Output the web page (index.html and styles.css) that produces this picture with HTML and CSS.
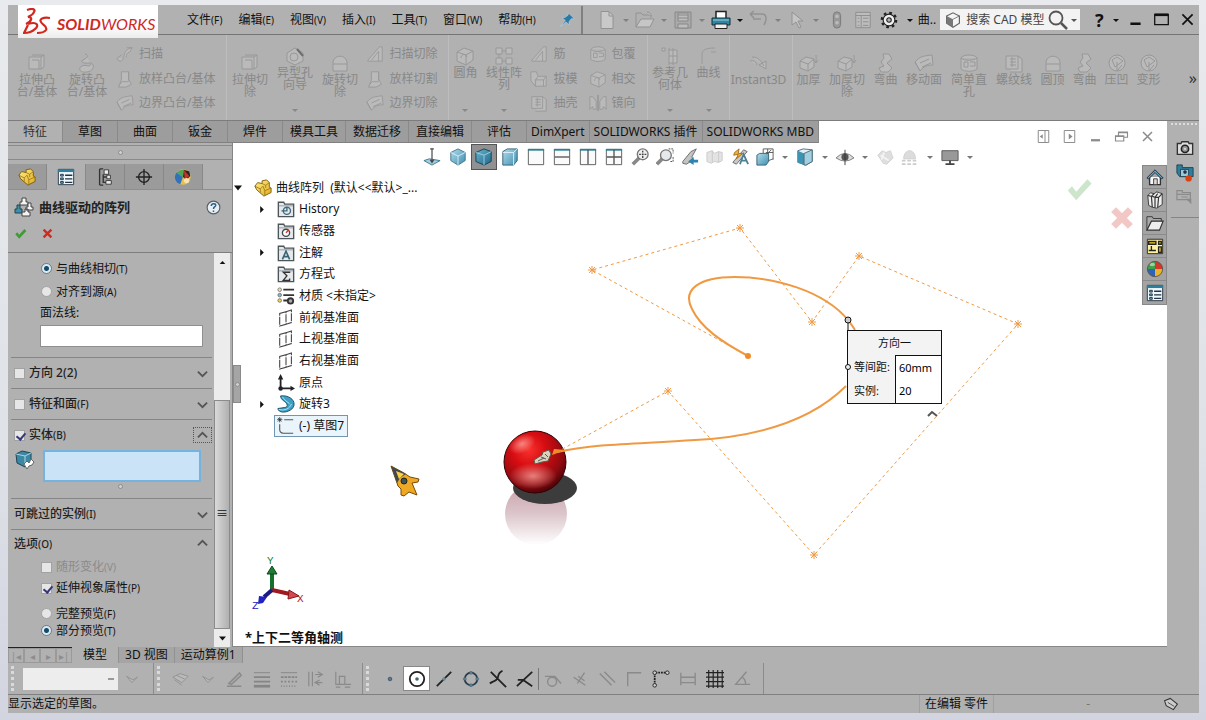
FILE: index.html
```html
<!DOCTYPE html>
<html lang="zh-CN">

<head>
  <meta charset="UTF-8">
  <meta name="viewport" content="width=device-width, initial-scale=1.0">
  <title>SOLIDWORKS</title>
  <link rel="stylesheet" href="styles.css">
</head>

<body>
  <!-- icon library -->
  <svg class="defs" aria-hidden="true">
    <defs>
      <linearGradient id="blue" x1="0" y1="0" x2="1" y2="1">
        <stop offset="0" stop-color="#b5dcea" />
        <stop offset="1" stop-color="#3f8fb0" />
      </linearGradient>
      <linearGradient id="deep" x1="0" y1="0" x2="1" y2="1">
        <stop offset="0" stop-color="#6db4cf" />
        <stop offset="1" stop-color="#1f6788" />
      </linearGradient>
      <linearGradient id="gold" x1="0" y1="0" x2="1" y2="1">
        <stop offset="0" stop-color="#ffee88" />
        <stop offset="1" stop-color="#e0ac20" />
      </linearGradient>
      <radialGradient id="red-ball" cx="0.4" cy="0.3" r="0.75">
        <stop offset="0" stop-color="#f8322e" />
        <stop offset="0.35" stop-color="#d80d12" />
        <stop offset="0.75" stop-color="#8e0a10" />
        <stop offset="1" stop-color="#3d0206" />
      </radialGradient>
      <radialGradient id="glow">
        <stop offset="0" stop-color="#ffb0a8" stop-opacity="0.7" />
        <stop offset="1" stop-color="#ffb0a8" stop-opacity="0" />
      </radialGradient>
      <linearGradient id="mirror" x1="0" y1="0" x2="0" y2="1">
        <stop offset="0" stop-color="#c9a0aa" />
        <stop offset="0.5" stop-color="#dcc6cb" />
        <stop offset="1" stop-color="#fff" />
      </linearGradient>
      <symbol id="i-part" viewBox="0 0 20 20"><path d="M1 8l3-4 5 1V2l5-1 3 3v5l2 1v5l-8 4L3 12z" fill="url(#gold)" stroke="#7c5a08" /><path d="M1 8l6 3 3-3 2 5 7-3M7 11v4M12 13v5M9 5l4 2 4-3M13 7v3" fill="none" stroke="#8f6a0c" stroke-width=".8" /></symbol>
      <symbol id="i-list" viewBox="0 0 20 20"><path d="M1.500 1.500h17v17h-17z" fill="#eef7fa" stroke="#234" /><path d="M1 3h18" stroke="#2d7f9c" stroke-width="3" /><path d="M4 7h3v2H4zM4 11h3v2H4zM4 15h3v2H4z" fill="#6ab" stroke="#234" /><path d="M9 8h8M9 12h8M9 16h8" stroke="#234" stroke-width="1.500" /></symbol>
      <symbol id="i-config" viewBox="0 0 20 20"><path d="M4 1v18M4 1h4M4 19h4M8 7v9h4M8 10h4" fill="none" stroke="#333" stroke-width="1.500" /><path d="M9 2h5v5H9zM12 8h4v4h-4zM11 14h6v4h-6z" fill="#eee" stroke="#333" /></symbol>
      <symbol id="i-target" viewBox="0 0 20 20"><circle cx="10" cy="10" r="6" fill="none" stroke="#222" stroke-width="1.500" /><path d="M10 1v18M1 10h18" stroke="#222" stroke-width="1.500" /></symbol>
      <symbol id="i-ball" viewBox="0 0 20 20"><circle cx="10" cy="10" r="8.500" fill="#e9b52c" /><path d="M10 10L10 1.500A8.500 8.500 0 0 0 1.500 10z" fill="#3fa24b" /><path d="M10 10L10 1.500A8.500 8.500 0 0 1 18.500 10z" fill="#d83626" /><path d="M10 10L1.500 10A8.500 8.500 0 0 0 10 18.500z" fill="#2f62b8" /><ellipse cx="7" cy="5" rx="3" ry="2" fill="#fff" opacity=".5" /><circle cx="10" cy="10" r="8.500" fill="none" stroke="#555" /></symbol>
      <symbol id="i-ball2" viewBox="0 0 20 20"><circle cx="10" cy="10" r="8.500" fill="#eac04a" /><path d="M10 10L3 5a8 8 0 0 0 4 13z" fill="#3372b8" /><path d="M10 10L3 5a9 9 0 0 1 8-3z" fill="#4da658" /><path d="M10 10l1-8 6 2 1 5-4 4z" fill="#222" /><path d="M11 2l6 7-5 4z" fill="#c63328" /><circle cx="14" cy="14" r="3" fill="#f7e3b3" /></symbol>
      <symbol id="i-pattern" viewBox="0 0 20 20"><path d="M8 1h4v4h2v3H6V5h2z" fill="#f4f4f4" stroke="#444" /><path d="M3 8h3v4h2v4H1v-4h2z" fill="#3d8fb2" stroke="#244" /><path d="M14 6h3v4h2v3h-7v-3h2zM11 12h3v3h2v4H8v-4h3z" fill="#f4f4f4" stroke="#444" /></symbol>
      <symbol id="i-help" viewBox="0 0 20 20"><circle cx="10" cy="10" r="8.500" fill="#e9eff3" stroke="#51626d" stroke-width="1.500" /><path d="M7 8c0-4 6-4 6-1 0 2-3 2-3 5M10 14v2" fill="none" stroke="#29648a" stroke-width="2" /></symbol>
      <symbol id="i-check" viewBox="0 0 20 20"><path d="M2 11l3-3 3 4 8-9 3 3L8 18z" fill="currentColor" /></symbol>
      <symbol id="i-cross" viewBox="0 0 20 20"><path d="M4 4l12 12M16 4L4 16" stroke="currentColor" stroke-width="5" /></symbol>
      <symbol id="i-cross-thin" viewBox="0 0 20 20"><path d="M4 4l12 12M16 4L4 16" stroke="currentColor" stroke-width="3.500" /></symbol>
      <symbol id="i-x" viewBox="0 0 20 20"><path d="M4 4l12 12M16 4L4 16" stroke="currentColor" stroke-width="2" /></symbol>
      <symbol id="i-down" viewBox="0 0 10 10"><path d="M2 4h6L5 7z" fill="currentColor" /></symbol>
      <symbol id="i-open-down" viewBox="0 0 10 10"><path d="M0 2h10L5 8z" fill="currentColor" /></symbol>
      <symbol id="i-up" viewBox="0 0 10 10"><path d="M1 7h8L5 3z" fill="currentColor" /></symbol>
      <symbol id="i-right" viewBox="0 0 10 10"><path d="M3 1v8l4-4z" fill="currentColor" /></symbol>
      <symbol id="i-chev" viewBox="0 0 12 12"><path d="M1 4l5 5 5-5" fill="none" stroke="currentColor" stroke-width="2" /></symbol>
      <symbol id="i-body" viewBox="0 0 20 20"><path d="M1 4l6-3 9 2v8l-6 6-8-4z" fill="#3c87a3" stroke="#1e4655" /><path d="M1 4l9 2 6-3M10 6v10" fill="none" stroke="#a9d6e6" /><path d="M9 14l3-3 2 2 2-4 3 3-2 3-3 1-2 3z" fill="#fff" stroke="#666" /></symbol>
      <symbol id="i-folder" viewBox="0 0 20 20"><path d="M1.500 18.500V2.500h6l1 2h10v14z" fill="#e6eaec" stroke="#4c555a" stroke-width="1.500" /><path d="M2 6.500h16" stroke="#8b9498" /></symbol>
      <symbol id="i-material" viewBox="0 0 20 20"><path d="M7 3h12M7 9h12M7 15h6" stroke="#333" stroke-width="2" /><circle cx="3" cy="3" r="2" fill="#f3e3a2" stroke="#777" /><circle cx="3" cy="9" r="2" fill="#7db5dc" stroke="#777" /><circle cx="3" cy="15" r="2" fill="#efcf58" stroke="#777" /><circle cx="15" cy="15.500" r="3" fill="#aaa" stroke="#333" stroke-width="2" /></symbol>
      <symbol id="i-plane" viewBox="0 0 20 20"><path d="M3 5l7-2v14l-7 2zM10 3l6-2v14l-6 2" fill="none" stroke="#444" stroke-width="1.200" stroke-dasharray="9 1" /></symbol>
      <symbol id="i-origin" viewBox="0 0 20 20"><path d="M4 3v13h12" fill="none" stroke="#222" stroke-width="2" /><path d="M1 6l3-6 3 6zM15 13l5 3-5 3z" fill="#222" /><circle cx="4" cy="16" r="2.500" fill="#222" /></symbol>
      <symbol id="i-revolve" viewBox="0 0 20 20"><path d="M4 1c9-1 15 4 15 9 0 6-7 9-12 9-4 0-6-2-6-4l7-1c3 0 4-2 3-4C10 7 4 6 4 1z" fill="#3fa0c6" stroke="#164a60" /><path d="M6 2c3 5 8 7 8 8M2 16c7 2 12-1 14-6" fill="none" stroke="#bfe4f2" /></symbol>
      <symbol id="i-sketch" viewBox="0 0 20 20"><path d="M8 3h10M3 8v6c0 3 2 4 4 4h11" fill="none" stroke="#555" stroke-width="1.200" /><path d="M3 0v6M0 3h6M1 1l4 4M5 1L1 5" stroke="#222" stroke-width=".8" /></symbol>
      <symbol id="i-normal" viewBox="0 0 20 20"><path d="M1 14l6-2 12 2-9 5z" fill="#9ed0e3" stroke="#43738a" /><path d="M10 1v14M8 1h4M8 13l2 3 2-3" fill="none" stroke="#444" stroke-width="1.300" /></symbol>
      <symbol id="i-cube" viewBox="0 0 20 20"><path d="M2 5l8-4 8 4v9l-8 5-8-5z" fill="url(#blue)" stroke="#3d7288" /><path d="M2 5l8 4 8-4M10 9v10" fill="none" stroke="#d9f0f7" /></symbol>
      <symbol id="i-cube-deep" viewBox="0 0 20 20"><path d="M1 5l9-4 8 3v11l-8 4-9-4z" fill="url(#deep)" stroke="#123f54" /><path d="M1 5l9 3 8-4M10 8v11" fill="none" stroke="#9fd3e6" /></symbol>
      <symbol id="i-cube2" viewBox="0 0 20 20"><path d="M2 4l5-3h11v13l-4 5H2z" fill="url(#blue)" stroke="#2c5f75" /><path d="M2 5h12v14M14 5l4-4" fill="none" stroke="#e0f3f9" /></symbol>
      <symbol id="i-win" viewBox="0 0 20 20"><path d="M1.500 1.500h17v17h-17z" fill="#fafafa" stroke="#555" /><path d="M1 2h18" stroke="#2c8199" stroke-width="2" /></symbol>
      <symbol id="i-zoom" viewBox="0 0 20 20"><path d="M2 18l7-7" stroke="#888" stroke-width="4" /><circle cx="13" cy="7" r="6" fill="#eee" stroke="#777" stroke-width="1.500" /><path d="M13 3v8M9 7h8" stroke="#444" stroke-width="1.500" stroke-dasharray="2 1" /></symbol>
      <symbol id="i-zoomarea" viewBox="0 0 20 20"><path d="M1 18l6-6" stroke="#888" stroke-width="4" /><circle cx="11" cy="8" r="6" fill="#e5e9eb" stroke="#777" stroke-width="1.500" /><path d="M14 1h5v5M19 10v5h-4" fill="none" stroke="#444" stroke-dasharray="2 1" /></symbol>
      <symbol id="i-prev" viewBox="0 0 20 20"><path d="M2 15l9-11 6-3-5 9 2 3-8 5-4-1z" fill="#c4c4c4" stroke="#666" /><path d="M19 13h-5v-3l-6 5 6 4v-3h5z" fill="#2d85ad" /></symbol>
      <symbol id="i-section" viewBox="0 0 20 20"><path d="M1 5l6-2 2 3 5-2 4 1v9l-4 2-5-1-3 2-5-2z" fill="#e3e3e3" stroke="#cacaca" /><path d="M7 3v13M14 4v12" stroke="#cacaca" /></symbol>
      <symbol id="i-dynamic" viewBox="0 0 20 20"><path d="M2 16L14 2l4 2L6 18z" fill="#c9c9c9" stroke="#666" /><path d="M4 5L9 1l-1 5h5l-7 6 2-5-5 1z" fill="#f2b430" stroke="#a3661b" /><path d="M10 18l4-11 5 11M11 14h7" fill="none" stroke="#4e7f93" stroke-width="2" /></symbol>
      <symbol id="i-orient" viewBox="0 0 20 20"><path d="M8 1h11v12M8 1v5M13 1v6M19 5h-8" fill="none" stroke="#555" /><path d="M1 8l3-2h10v9l-3 4H1z" fill="url(#blue)" stroke="#2c5f75" /><path d="M12 7l5-5M14 14l5-2" stroke="#555" /></symbol>
      <symbol id="i-style" viewBox="0 0 20 20"><path d="M2 3l6-2 10 1v13l-7 4-9-3z" fill="#e3eff4" stroke="#456a7a" /><path d="M2 3l7 3v13l-7-3z" fill="#3f93b2" /><path d="M9 6l9-4v13l-7 4H9z" fill="#a4cfe0" stroke="#456a7a" /></symbol>
      <symbol id="i-eye" viewBox="0 0 20 20"><path d="M0 11Q10 1 20 11Q10 18 0 11z" fill="#ddd" stroke="#777" /><circle cx="10" cy="10" r="4" fill="#555" /><path d="M10 2v17" stroke="#333" /></symbol>
      <symbol id="i-haze" viewBox="0 0 20 20"><path d="M2 8l5-5 4 2 5-2 3 8-7 7-4-1z" fill="#dedede" stroke="#d2d2d2" /><path d="M5 8l9 6M9 5l-3 8" stroke="#f4f4f4" stroke-width="2" /></symbol>
      <symbol id="i-scene" viewBox="0 0 20 20"><path d="M3 12c0-12 13-12 13 0z" fill="#dcdcdc" stroke="#cecece" /><path d="M1 14h18M1 18h18" stroke="#ccc" stroke-width="2" stroke-dasharray="4 2" /></symbol>
      <symbol id="i-screen" viewBox="0 0 20 20"><path d="M1 3h18v11H1z" fill="#999" stroke="#555" /><path d="M10 14v4M5 18h10" stroke="#444" stroke-width="2" /></symbol>
      <symbol id="i-home" viewBox="0 0 20 20"><path d="M4 10v8.500h12V10" fill="#f7f7f7" stroke="#333" stroke-width="1.500" /><path d="M1 11l9-9 9 9-2 1-7-7-7 7z" fill="#5ba7c2" stroke="#223" /><path d="M8.500 18v-6h4v6" fill="#ddd" stroke="#333" /></symbol>
      <symbol id="i-books" viewBox="0 0 20 20"><path d="M2 5l3-3 4 1 3-2 3 1 3 1v12l-6 4-5-1-4-2z" fill="#eee" stroke="#333" /><path d="M2 5l4 1 3-3M6 6l1 12M7 6l3 1 3-4M10 7v11M10 7l4 0 4-4M14 7l-1 11" fill="none" stroke="#333" stroke-width="1.300" /></symbol>
      <symbol id="i-open" viewBox="0 0 20 20"><path d="M1 18V3h6l1 2h9v3" fill="#aaa" stroke="#333" /><path d="M1 18L6 8h13l-4 10z" fill="#eee" stroke="#333" stroke-width="1.300" /></symbol>
      <symbol id="i-palette" viewBox="0 0 20 20"><path d="M1.500 2.500h17v16h-17z" fill="#fff3a0" stroke="#222" /><path d="M3 5h8v3H3zM14 5h3v3h-3zM6 10v5M3 15h8M14 11h3v6h-3z" fill="#f5cf2c" stroke="#222" stroke-width="1.500" /></symbol>
      <symbol id="i-camera" viewBox="0 0 20 20"><path d="M1.500 5h4l1-2h7l1 2h4v12h-17z" fill="#ddd" stroke="#333" stroke-width="1.500" /><circle cx="10" cy="11" r="4" fill="#999" stroke="#222" stroke-width="1.800" /><circle cx="10" cy="11" r="1" fill="#eee" /></symbol>
      <symbol id="i-record" viewBox="0 0 20 20"><path d="M1 1h6v3h12v10H4L1 10z" fill="#2e7e9e" stroke="#1c4150" /><path d="M5 6h9v8H5z" fill="#9cc9da" stroke="#1c4150" /><circle cx="10" cy="9" r="2" fill="#234" /><circle cx="14" cy="16" r="3.500" fill="#d84112" /></symbol>
      <symbol id="i-stop" viewBox="0 0 20 20"><path d="M1 3h6v2h9v8H1zM1 7h15M6 10h7" fill="none" stroke="#8b8b8b" stroke-width="1.300" /><path d="M11 12h6v6z" fill="#8b8b8b" /></symbol>
      <symbol id="i-new" viewBox="0 0 20 20"><path d="M4 1.500h8l4 4v13H4z" fill="#c9c9c9" stroke="#929292" /><path d="M12 2v4h4" fill="none" stroke="#929292" /></symbol>
      <symbol id="i-openfile" viewBox="0 0 20 20"><path d="M1 17V3h5l2 2h8v3" fill="none" stroke="#929292" /><path d="M1 17L6 9h13l-4 8zM12 2c3 0 4 2 4 4" fill="#c6c6c6" stroke="#929292" /></symbol>
      <symbol id="i-save" viewBox="0 0 20 20"><path d="M2 2h16v16H2z" fill="#aaa" stroke="#888" /><path d="M5 3h10v8H5zM5 14h10v4H5zM5 5h10M5 8h10" fill="#bdbdbd" stroke="#888" /></symbol>
      <symbol id="i-print" viewBox="0 0 20 20"><path d="M5 8V1.500h10V8" fill="#fff" stroke="#222" stroke-width="1.500" /><path d="M1 8h18v7H1z" fill="#2f86a3" stroke="#14303b" /><path d="M2 10h16" stroke="#9bd0e0" /><path d="M4 14h12v4.500H4z" fill="#eee" stroke="#222" /></symbol>
      <symbol id="i-undo" viewBox="0 0 20 20"><path d="M1 4h12c5 0 5 6 2 11M1 4l4-3M1 4l4 4M4 9h8" fill="none" stroke="#929292" stroke-width="1.500" /></symbol>
      <symbol id="i-select" viewBox="0 0 20 20"><path d="M5 2v13l4-3 3 6 2-1-3-6h5z" fill="#c4c4c4" stroke="#929292" /></symbol>
      <symbol id="i-rebuild" viewBox="0 0 20 20"><rect x="6" y="1" width="8" height="18" rx="4" fill="#999" stroke="#777" /><circle cx="10" cy="6" r="2" fill="#bbb" /><circle cx="10" cy="13" r="2" fill="#bbb" /></symbol>
      <symbol id="i-props" viewBox="0 0 20 20"><path d="M2 1.500h16v17H2z" fill="#bdbdbd" stroke="#8b8b8b" /><path d="M2 5h16M8 5v13M4 8h2M4 12h2M4 16h2M10 8h6M10 12h6M10 16h6" stroke="#8b8b8b" /></symbol>
      <symbol id="i-gear" viewBox="0 0 20 20"><circle cx="10" cy="10" r="8" fill="none" stroke="#222" stroke-width="2.500" stroke-dasharray="3 3.283" /><circle cx="10" cy="10" r="6.500" fill="#eee" stroke="#222" stroke-width="1.200" /><circle cx="10" cy="10" r="2.500" fill="#b1b1b1" stroke="#222" stroke-width="1.200" /></symbol>
      <symbol id="i-cubeg" viewBox="0 0 20 20"><path d="M2 5l8-4 8 4v9l-8 5-8-5z" fill="#f5f5f5" stroke="#666" stroke-width="1.500" /><path d="M2 5l8 4v10l-8-5z" fill="#777" /><path d="M10 9l8-4" stroke="#666" /></symbol>
      <symbol id="i-search" viewBox="0 0 20 20"><circle cx="8" cy="8" r="6.500" fill="none" stroke="#555" stroke-width="1.800" /><path d="M13 13l6 6" stroke="#555" stroke-width="2.500" /></symbol>
      <symbol id="i-pin" viewBox="0 0 20 20"><path d="M11 1l8 8-4 0-3 4 0 4-4-4-7 6 6-8-4-3 4-1 4-3z" fill="#2b7aa6" stroke="#d7e6ef" stroke-width=".6" /></symbol>
      <symbol id="i-min" viewBox="0 0 20 20"><path d="M4 15h12" stroke="currentColor" stroke-width="3" /></symbol>
      <symbol id="i-max" viewBox="0 0 20 20"><path d="M2 4h16v12H2z" fill="none" stroke="currentColor" stroke-width="1.500" /><path d="M2 4.500h16" stroke="currentColor" stroke-width="3" /></symbol>
      <symbol id="i-restore" viewBox="0 0 20 20"><path d="M2 9h11v7H2zM6 9V4h12v7h-5M6 5h12M2 10h11" fill="none" stroke="currentColor" stroke-width="1.500" /></symbol>
      <symbol id="i-dockl" viewBox="0 0 20 20"><path d="M3 2h14v16H3zM12 2v16" fill="none" stroke="currentColor" stroke-width="1.300" /><path d="M9 7v6l-4-3z" fill="currentColor" /></symbol>
      <symbol id="i-dockr" viewBox="0 0 20 20"><path d="M3 2h14v16H3z" fill="none" stroke="currentColor" stroke-width="1.300" /><path d="M9 6v8l5-4z" fill="currentColor" /></symbol>
      <symbol id="i-tag" viewBox="0 0 20 20"><path d="M2 6l7-3 9 7-5 7-9-5z" fill="#ccc" stroke="#333" stroke-width="1.300" /><path d="M6 8l8 5" stroke="#333" /></symbol>

      <!-- greyed ribbon icons -->
      <symbol id="r-extrude" viewBox="0 0 20 20"><path d="M2 4h12v12H2zM5 7h7v9M14 4l3-2v12l-3 2M5 2h12" class="ghost" /></symbol>
      <symbol id="r-revolve" viewBox="0 0 20 20"><path d="M8 1c5 1 1 5-2 6s0 4 6 3 6 8-2 9-9-4-5-6 8 2 9-2" class="ghost" /></symbol>
      <symbol id="r-sweep" viewBox="0 0 20 20"><path d="M1 15c3 5 7 3 8-3s4-8 9-9l-3 5c-3 0-3 3-4 6M1 15l5-4M12 3l6 0" class="ghost" /></symbol>
      <symbol id="r-loft" viewBox="0 0 20 20"><path d="M6 2h8v8l3 6-6 3H3l3-8zM14 2v10M3 17l4-4h7" class="ghost" /></symbol>
      <symbol id="r-boundary" viewBox="0 0 20 20"><path d="M1 9c5-6 9-6 17-7l1 10c-6 0-9 1-13 6zM1 9l5 9M6 10l9-4M8 14l9-4" class="ghost" /></symbol>
      <symbol id="r-hole" viewBox="0 0 20 20"><path d="M2 7l8-5 8 5v8l-8 4-8-4z" class="ghost" /><circle cx="9" cy="11" r="4" class="ghost" /><path d="M12 3l6 7" stroke="#6d6d6d" stroke-width="2" /></symbol>
      <symbol id="r-fillet" viewBox="0 0 20 20"><path d="M2 6l7-4 9 3v9l-7 5-9-4zM2 6l9 3v10M11 9l7-4M6 12c0-4 5-5 6-1" class="ghost" /></symbol>
      <symbol id="r-rib" viewBox="0 0 20 20"><path d="M2 17L15 2h3v16H2zM6 17l8-10v11" class="ghost" /></symbol>
      <symbol id="r-wrap" viewBox="0 0 20 20"><path d="M2 5c2-4 14-4 16 0v11c-4 3-12 3-16 0zM2 5c4 3 12 3 16 0M5 9h4v5H5zM11 9h5v4h-5" class="ghost" /></symbol>
      <symbol id="r-mirror" viewBox="0 0 20 20"><path d="M1 3h3l4 5v9H5l-1-3-3 3zM19 3h-3l-4 5v9h3l1-3 3 3z" class="ghost" /><path d="M10 1v18" stroke="#858585" /></symbol>
      <symbol id="r-grid" viewBox="0 0 20 20"><path d="M2 2h6v6H2zM12 2h6v6h-6zM2 12h6v6H2zM12 12h6v6h-6zM8 5h4M8 15h4M5 8v4" class="ghost" /></symbol>
      <symbol id="r-ref" viewBox="0 0 20 20"><path d="M2 2h3v3H2zM9 2v17M9 4h8v13H9M13 2v17M9 10h8" class="ghost" /></symbol>
      <symbol id="r-cut" viewBox="0 0 20 20"><path d="M1 8l6-4 8 2v8l-6 4-8-3zM1 8l8 3v7M9 11l6-5M17 2v8l-2-3M17 10l2-3" class="ghost" /></symbol>
      <symbol id="r-draft" viewBox="0 0 20 20"><path d="M1 2h6l2 5h9v11H6L1 12zM9 7l-3 4v7M6 11h9v7M15 11l3-4" class="ghost" /></symbol>
      <symbol id="r-arrow" viewBox="0 0 20 20"><path d="M3 4c6 0 9 4 12 9M10 12l7 4V8zM1 8c4-1 6 1 7 4" class="ghost" /></symbol>
      <symbol id="r-curve" viewBox="0 0 20 20"><path d="M3 18V9c0-5 3-7 13-7M12 6h5" fill="none" stroke="#9a9a9a" /></symbol>
      <symbol id="r-thread" viewBox="0 0 20 20"><path d="M2 3h12v13H2zM14 3l4 3v13H6M6 6h6M6 9h6M6 12h6M8 4v10" class="ghost" /></symbol>
      <symbol id="r-dome" viewBox="0 0 20 20"><path d="M3 10c0-9 14-9 14 0v8H3zM3 11h14" class="ghost" /></symbol>
      <symbol id="r-flex" viewBox="0 0 20 20"><path d="M7 1h6l3 5-5 4 5 5-4 4H5l-2-4 5-2-3-4 3-4z" class="ghost" /></symbol>
      <symbol id="r-deform" viewBox="0 0 20 20"><circle cx="10" cy="10" r="8" class="ghost" /><path d="M5 7l5-3 6 4-8 6zM10 9v9l5-6" class="ghost" /></symbol>

      <!-- sketch snap icons -->
      <symbol id="s-point" viewBox="0 0 20 20"><circle cx="10" cy="10" r="2" fill="#5c7787" stroke="#456" /></symbol>
      <symbol id="s-center" viewBox="0 0 20 20"><circle cx="10" cy="10" r="8" fill="none" stroke="#222" stroke-width="2" /><circle cx="10" cy="10" r="2" fill="#466" /></symbol>
      <symbol id="s-mid" viewBox="0 0 20 20"><path d="M2 18L18 2" stroke="#222" stroke-width="2" /><circle cx="10" cy="10" r="2" fill="#68889a" /></symbol>
      <symbol id="s-quad" viewBox="0 0 20 20"><circle cx="10" cy="10" r="7" fill="none" stroke="#2c3c46" stroke-width="2" /><path d="M10 1v4M10 15v4M1 10h4M15 10h4" stroke="#587b92" stroke-width="3" /></symbol>
      <symbol id="s-cross" viewBox="0 0 20 20"><path d="M2 2l17 17M15 1c-6 2-4 7-6 9-2 3-5 2-8 5" fill="none" stroke="#222" stroke-width="2" /></symbol>
      <symbol id="s-near" viewBox="0 0 20 20"><path d="M1 18L18 2M8 11l10 7M2 11h6" fill="none" stroke="#222" stroke-width="2" /></symbol>
      <symbol id="s-tan" viewBox="0 0 20 20"><circle cx="9" cy="13" r="5" fill="none" stroke="#8a8a8a" stroke-width="1.500" /><path d="M1 7h11l7 8" fill="none" stroke="#8a8a8a" stroke-width="1.500" /></symbol>
      <symbol id="s-perp" viewBox="0 0 20 20"><path d="M3 8l13 9M7 15l8-12M8 7l7 5" stroke="#8a8a8a" stroke-width="1.500" /></symbol>
      <symbol id="s-par" viewBox="0 0 20 20"><path d="M2 4l13 13M7 2l12 12" stroke="#8a8a8a" stroke-width="1.500" /></symbol>
      <symbol id="s-hv" viewBox="0 0 20 20"><path d="M3 18V3h15" fill="none" stroke="#8a8a8a" stroke-width="1.500" /></symbol>
      <symbol id="s-hvp" viewBox="0 0 20 20"><path d="M3 17V3h14" fill="none" stroke="#222" stroke-width="2" stroke-dasharray="2 1" /><circle cx="3" cy="3" r="2" fill="#ccc" stroke="#222" /><circle cx="17" cy="3" r="2" fill="#ccc" stroke="#222" /><circle cx="3" cy="17" r="2" fill="#ccc" stroke="#222" /></symbol>
      <symbol id="s-len" viewBox="0 0 20 20"><path d="M2 3v14M18 3v14M2 8h16M2 14h16" stroke="#8a8a8a" stroke-width="1.500" /></symbol>
      <symbol id="s-grid" viewBox="0 0 20 20"><path d="M0 3h20M0 8h20M0 13h20M0 18h20M3 0v20M8 0v20M13 0v20M18 0v20" stroke="#222" stroke-width="1.300" /></symbol>
      <symbol id="s-angle" viewBox="0 0 20 20"><path d="M15 2L3 16h16M10 8c4 2 4 5 4 8" fill="none" stroke="#8a8a8a" stroke-width="1.500" /></symbol>
      <symbol id="l-layer" viewBox="0 0 20 20"><path d="M1 8l8-4 9 3-7 7zM3 11l8 6M5 6l9 4" fill="#bababa" stroke="#919191" /></symbol>
      <symbol id="l-small" viewBox="0 0 20 20"><path d="M4 7l6 7 6-6-5 3z" fill="#bababa" stroke="#919191" /></symbol>
      <symbol id="l-pen" viewBox="0 0 20 20"><path d="M3 15L15 3l2 3L6 16zM1 18h16" fill="#a5a5a5" stroke="#8a8a8a" stroke-width="1.500" /></symbol>
      <symbol id="l-thick" viewBox="0 0 20 20"><path d="M1 3h18" stroke="#858585" /><path d="M1 8h18M1 13h18" stroke="#858585" stroke-width="2" /><path d="M1 18h18" stroke="#858585" stroke-width="3" /></symbol>
      <symbol id="l-style" viewBox="0 0 20 20"><path d="M1 3h18" stroke="#858585" /><path d="M1 8h18" stroke="#858585" stroke-width="2" stroke-dasharray="3 1" /><path d="M1 13h18" stroke="#858585" stroke-width="2" stroke-dasharray="2 2" /><path d="M1 18h18" stroke="#858585" stroke-width="2" stroke-dasharray="1 2" /></symbol>
      <symbol id="l-swap" viewBox="0 0 20 20"><path d="M2 2v16M6 2v16M9 5h8M9 14h8M12 2l5 3-5 3M14 11l-5 3 5 3" fill="none" stroke="#8a8a8a" stroke-width="1.300" /></symbol>
      <symbol id="l-ord" viewBox="0 0 20 20"><path d="M2 2v14h17M6 6v10M6 7h6v9M2 19h5M12 19h6" fill="none" stroke="#8a8a8a" stroke-width="1.300" /></symbol>
    </defs>
  </svg>

  <div class="app">
    <header class="titlebar">
      <div class="logo">
        <svg class="logo-mark" viewBox="0 0 28 28" role="img" aria-label="3DS"><path d="M4 2C9 0 13 1 11 4C10 7 7 8 5 9C10 9 9 13 3 16M5 16C15 13 16 18 12 21C9 24 5 25 1 25L5 17M27 10C20 9 16 11 18 14C19 17 25 18 23 22C21 25 17 25 14 25" fill="none" stroke="#d0281e" stroke-width="2.200" /></svg>
        <span class="logo-text"><b>SOLID</b>WORKS</span>
      </div>
      <nav class="menu">
        <button>文件<span class="key">(F)</span></button>
        <button>编辑<span class="key">(E)</span></button>
        <button>视图<span class="key">(V)</span></button>
        <button>插入<span class="key">(I)</span></button>
        <button>工具<span class="key">(T)</span></button>
        <button>窗口<span class="key">(W)</span></button>
        <button>帮助<span class="key">(H)</span></button>
        <button class="pin" aria-label="固定菜单"><svg><use href="#i-pin" /></svg></button>
      </nav>
      <div class="quick">
        <button aria-label="新建"><svg><use href="#i-new" /></svg></button>
        <button class="drop dim" aria-label="新建选项"><svg><use href="#i-down" /></svg></button>
        <button aria-label="打开"><svg><use href="#i-openfile" /></svg></button>
        <button class="drop dim" aria-label="打开选项"><svg><use href="#i-down" /></svg></button>
        <button aria-label="保存"><svg><use href="#i-save" /></svg></button>
        <button class="drop dim" aria-label="保存选项"><svg><use href="#i-down" /></svg></button>
        <button aria-label="打印"><svg><use href="#i-print" /></svg></button>
        <button class="drop" aria-label="打印选项"><svg><use href="#i-down" /></svg></button>
        <button aria-label="撤消"><svg><use href="#i-undo" /></svg></button>
        <button class="drop dim" aria-label="撤消选项"><svg><use href="#i-down" /></svg></button>
        <button aria-label="选择"><svg><use href="#i-select" /></svg></button>
        <button class="drop dim" aria-label="选择选项"><svg><use href="#i-down" /></svg></button>
        <button class="wide" aria-label="重建模型"><svg><use href="#i-rebuild" /></svg></button>
        <button class="wide" aria-label="文件属性"><svg><use href="#i-props" /></svg></button>
        <button class="wide" aria-label="选项"><svg><use href="#i-gear" /></svg></button>
        <button class="drop" aria-label="选项菜单"><svg><use href="#i-down" /></svg></button>
      </div>
      <span class="doc-name">曲..</span>
      <div class="search">
        <svg class="ico16"><use href="#i-cubeg" /></svg>
        <input type="text" placeholder="搜索 CAD 模型" aria-label="搜索 CAD 模型">
        <button aria-label="搜索"><svg class="ico20"><use href="#i-search" /></svg></button>
        <button class="drop" aria-label="搜索选项"><svg><use href="#i-down" /></svg></button>
      </div>
      <div class="window-btns">
        <button class="help">?</button>
        <button class="drop" aria-label="帮助选项"><svg><use href="#i-down" /></svg></button>
        <button aria-label="最小化"><svg><use href="#i-min" /></svg></button>
        <button aria-label="最大化"><svg><use href="#i-max" /></svg></button>
        <button aria-label="关闭"><svg><use href="#i-x" /></svg></button>
      </div>
    </header>

    <section class="ribbon">
      <div class="group">
        <button class="big w50"><svg><use href="#r-extrude" /></svg><span>拉伸凸台/基体</span></button>
        <button class="big w50"><svg><use href="#r-revolve" /></svg><span>旋转凸台/基体</span></button>
        <div class="stack">
          <button><svg><use href="#r-sweep" /></svg>扫描</button>
          <button><svg><use href="#r-loft" /></svg>放样凸台/基体</button>
          <button><svg><use href="#r-boundary" /></svg>边界凸台/基体</button>
        </div>
      </div>
      <div class="group">
        <button class="big w45"><svg><use href="#r-extrude" /></svg><span>拉伸切除</span></button>
        <button class="big w45 menu-btn"><svg><use href="#r-hole" /></svg><span>异型孔向导</span><svg class="arrow"><use href="#i-down" /></svg></button>
        <button class="big w45"><svg><use href="#r-dome" /></svg><span>旋转切除</span></button>
        <div class="stack">
          <button><svg><use href="#r-rib" /></svg>扫描切除</button>
          <button><svg><use href="#r-loft" /></svg>放样切割</button>
          <button><svg><use href="#r-boundary" /></svg>边界切除</button>
        </div>
      </div>
      <div class="group">
        <button class="big w32 menu-btn"><svg><use href="#r-fillet" /></svg><span>圆角</span><svg class="arrow"><use href="#i-down" /></svg></button>
        <button class="big w45 menu-btn"><svg><use href="#r-grid" /></svg><span>线性阵列</span><svg class="arrow"><use href="#i-down" /></svg></button>
        <div class="stack">
          <button><svg><use href="#r-rib" /></svg>筋</button>
          <button><svg><use href="#r-draft" /></svg>拔模</button>
          <button><svg><use href="#r-thread" /></svg>抽壳</button>
        </div>
        <div class="stack">
          <button><svg><use href="#r-wrap" /></svg>包覆</button>
          <button><svg><use href="#r-fillet" /></svg>相交</button>
          <button><svg><use href="#r-mirror" /></svg>镜向</button>
        </div>
      </div>
      <div class="group">
        <button class="big w45 menu-btn"><svg><use href="#r-ref" /></svg><span>参考几何体</span><svg class="arrow"><use href="#i-down" /></svg></button>
        <button class="big w32 menu-btn"><svg><use href="#r-curve" /></svg><span>曲线</span><svg class="arrow"><use href="#i-down" /></svg></button>
      </div>
      <div class="group">
        <button class="big w60"><svg><use href="#r-arrow" /></svg><span>Instant3D</span></button>
      </div>
      <div class="group last">
        <button class="big w32"><svg><use href="#r-cut" /></svg><span>加厚</span></button>
        <button class="big w45"><svg><use href="#r-cut" /></svg><span>加厚切除</span></button>
        <button class="big w32"><svg><use href="#r-flex" /></svg><span>弯曲</span></button>
        <button class="big w45"><svg><use href="#r-boundary" /></svg><span>移动面</span></button>
        <button class="big w45"><svg><use href="#r-wrap" /></svg><span>简单直孔</span></button>
        <button class="big w45"><svg><use href="#r-thread" /></svg><span>螺纹线</span></button>
        <button class="big w32"><svg><use href="#r-dome" /></svg><span>圆顶</span></button>
        <button class="big w32"><svg><use href="#r-flex" /></svg><span>弯曲</span></button>
        <button class="big w32"><svg><use href="#r-deform" /></svg><span>压凹</span></button>
        <button class="big w32"><svg><use href="#r-deform" /></svg><span>变形</span></button>
      </div>
      <button class="more">»</button>
    </section>

    <div class="work">
      <div class="document">
        <div class="tab-row">
          <nav class="tabs">
            <button class="active">特征</button>
            <button>草图</button>
            <button>曲面</button>
            <button>钣金</button>
            <button>焊件</button>
            <button>模具工具</button>
            <button>数据迁移</button>
            <button>直接编辑</button>
            <button>评估</button>
            <button class="latin">DimXpert</button>
            <button class="latin">SOLIDWORKS 插件</button>
            <button class="latin">SOLIDWORKS MBD</button>
          </nav>
          <div class="doc-btns">
            <button aria-label="停靠左侧"><svg><use href="#i-dockl" /></svg></button>
            <button aria-label="停靠右侧"><svg><use href="#i-dockr" /></svg></button>
            <button aria-label="最小化"><svg><use href="#i-min" /></svg></button>
            <button aria-label="还原"><svg><use href="#i-restore" /></svg></button>
            <button aria-label="关闭"><svg><use href="#i-x" /></svg></button>
          </div>
        </div>

        <div class="split">
          <aside class="panel">
            <div class="panel-grip"><i class="knob"></i></div>
            <nav class="panel-tabs">
              <button aria-label="特征树"><svg><use href="#i-part" /></svg></button>
              <button class="active" aria-label="属性"><svg><use href="#i-list" /></svg></button>
              <button aria-label="配置"><svg><use href="#i-config" /></svg></button>
              <button aria-label="尺寸专家"><svg><use href="#i-target" /></svg></button>
              <button aria-label="外观"><svg><use href="#i-ball2" /></svg></button>
            </nav>
            <div class="panel-head">
              <h1><svg class="ico20"><use href="#i-pattern" /></svg>曲线驱动的阵列</h1>
              <button class="panel-help" aria-label="帮助"><svg><use href="#i-help" /></svg></button>
              <div class="confirm">
                <button class="ok" aria-label="确定"><svg><use href="#i-check" /></svg></button>
                <button class="cancel" aria-label="取消"><svg><use href="#i-cross-thin" /></svg></button>
              </div>
            </div>
            <div class="panel-scroll">
              <form class="props">
                <section class="first">
                  <label class="opt"><input type="radio" name="align" checked>与曲线相切<span class="key">(T)</span></label>
                  <label class="opt"><input type="radio" name="align">对齐到源<span class="key">(A)</span></label>
                  <label class="field" for="normal">面法线:</label>
                  <input class="box" id="normal" type="text">
                </section>
                <section>
                  <h2><label><input type="checkbox">方向 2(2)</label><button type="button" class="fold" aria-label="展开"><svg><use href="#i-chev" /></svg></button></h2>
                </section>
                <section>
                  <h2><label><input type="checkbox">特征和面<span class="key">(F)</span></label><button type="button" class="fold" aria-label="展开"><svg><use href="#i-chev" /></svg></button></h2>
                </section>
                <section>
                  <h2><label><input type="checkbox" checked>实体<span class="key">(B)</span></label><button type="button" class="fold open focus" aria-label="收起"><svg><use href="#i-chev" /></svg></button></h2>
                  <div class="bodies">
                    <svg class="ico20"><use href="#i-body" /></svg>
                    <input type="text" aria-label="要阵列的实体">
                  </div>
                  <div class="resize"><i class="knob"></i></div>
                </section>
                <section>
                  <h2>可跳过的实例<span class="key">(I)</span><button type="button" class="fold" aria-label="展开"><svg><use href="#i-chev" /></svg></button></h2>
                </section>
                <section class="options">
                  <h2>选项<span class="key">(O)</span><button type="button" class="fold open" aria-label="收起"><svg><use href="#i-chev" /></svg></button></h2>
                  <label class="opt off"><input type="checkbox" disabled>随形变化<span class="key">(V)</span></label>
                  <label class="opt"><input type="checkbox" checked>延伸视象属性<span class="key">(P)</span></label>
                  <div class="pair">
                    <label class="opt"><input type="radio" name="preview">完整预览<span class="key">(F)</span></label>
                    <label class="opt"><input type="radio" name="preview" checked>部分预览<span class="key">(T)</span></label>
                  </div>
                </section>
              </form>
              <div class="scrollbar">
                <button aria-label="向上"><svg><use href="#i-up" /></svg></button>
                <div class="track"><div class="thumb">≡</div></div>
                <button aria-label="向下"><svg><use href="#i-open-down" /></svg></button>
              </div>
            </div>
          </aside>

          <main class="viewport">
            <svg class="scene" viewBox="233 143 934 504" role="img" aria-label="曲线阵列模型">
              <ellipse cx="536" cy="514" rx="31" ry="31" fill="url(#mirror)" />
              <ellipse cx="545" cy="488" rx="32" ry="16" fill="#3c3c3c" />
              <circle cx="535" cy="462" r="31" fill="url(#red-ball)" stroke="#310205" />
              <ellipse cx="533" cy="476" rx="24" ry="13" fill="url(#glow)" />
              <ellipse cx="522" cy="444" rx="14" ry="9" fill="url(#glow)" transform="rotate(-25 522 444)" />
              <g class="hull">
                <path d="M557 452L668 391L814 555L1018 324L859 256L812 322L740 228L592 270L748 356" />
              </g>
              <path class="curve" d="M557 452C600 443 640 444 695 440C770 436 818 414 846 386M855 330C852 325 850 323 848 320C824 291 775 277 735 277C698 277 682 290 692 309C701 328 722 342 748 356" />
              <circle cx="748" cy="356" r="3" fill="#f08c28" />
              <g class="stars">
                <path d="M668 387v8M664 391h8M665 388l6 6M671 388l-6 6" />
                <path d="M814 551v8M810 555h8M811 552l6 6M817 552l-6 6" />
                <path d="M1018 320v8M1014 324h8M1015 321l6 6M1021 321l-6 6" />
                <path d="M859 252v8M855 256h8M856 253l6 6M862 253l-6 6" />
                <path d="M812 318v8M808 322h8M809 319l6 6M815 319l-6 6" />
                <path d="M740 224v8M736 228h8M737 225l6 6M743 225l-6 6" />
                <path d="M592 266v8M588 270h8M589 267l6 6M595 267l-6 6" />
              </g>
              <path d="M534 460l8-5 1-3 6-2 2 4-3 7-6 1-7 2z" fill="#d8d2bd" stroke="#5c5a50" />
              <path d="M541 457l5 2M545 454l3 3M538 461l6-3" stroke="#555" />
              <path d="M552 455l14-5-12-1z" fill="#f08c28" />
              <path d="M848 320v11" stroke="#111" />
              <circle cx="848" cy="320" r="3" fill="#ccc" stroke="#111" />
              <path d="M928 416l4-4 5 4" fill="none" stroke="#555" stroke-width="2" />
              <!-- axes triad -->
              <path d="M272 591V573" stroke="#14702a" stroke-width="4" />
              <path d="M267 574l5-8 5 8z" fill="#1c8034" stroke="#0d4a1c" />
              <path d="M272 590l18 4" stroke="#a01820" stroke-width="4" />
              <path d="M289 590l10 6-11 3z" fill="#d14a50" stroke="#8a1218" />
              <path d="M272 590l-8 7" stroke="#1a1a80" stroke-width="4" />
              <path d="M267 597l-4 6-5 1 1-8z" fill="#2222c0" />
              <text x="267" y="564" class="axis-y">Y</text>
              <text x="297" y="602" class="axis-x">X</text>
              <text x="252" y="609" class="axis-z">Z</text>
              <!-- pointer -->
              <path d="M391 466l13 7 6 4 9 2-1 3-6 1 5 12-8-3-5 4-3-1 0-6-3-3z" fill="#eda824" stroke="#7b4a08" />
              <path d="M391 466l6 17 3-5 6-4z" fill="#45484a" />
              <path d="M396 471l3 8 5-5z" fill="#f6d24a" />
              <circle cx="404" cy="481" r="3" fill="#3c5658" stroke="#222" />
            </svg>

            <div class="view-bar">
              <div class="views">
                <button aria-label="正视于"><svg><use href="#i-normal" /></svg></button>
                <button aria-label="等轴测"><svg><use href="#i-cube" /></svg></button>
                <button class="active" aria-label="上下二等角轴测"><svg><use href="#i-cube-deep" /></svg></button>
                <button aria-label="左右二等角轴测"><svg><use href="#i-cube2" /></svg></button>
                <button aria-label="单一视图"><svg><use href="#i-win" /></svg></button>
                <button aria-label="二视图水平"><svg viewBox="0 0 20 20"><use href="#i-win" /><path d="M2 10h16" stroke="#555" stroke-width="1.500" /></svg></button>
                <button aria-label="二视图竖直"><svg viewBox="0 0 20 20"><use href="#i-win" /><path d="M10 2v16" stroke="#555" stroke-width="1.500" /></svg></button>
                <button aria-label="四视图"><svg viewBox="0 0 20 20"><use href="#i-win" /><path d="M2 10h16M10 2v16" stroke="#555" stroke-width="1.500" /></svg></button>
              </div>
              <div class="tools">
                <button aria-label="整屏显示"><svg><use href="#i-zoom" /></svg></button>
                <button aria-label="局部放大"><svg><use href="#i-zoomarea" /></svg></button>
                <button aria-label="上一视图"><svg><use href="#i-prev" /></svg></button>
                <button aria-label="剖面视图"><svg><use href="#i-section" /></svg></button>
                <button aria-label="动态注解"><svg><use href="#i-dynamic" /></svg></button>
                <button aria-label="视图定向"><svg><use href="#i-orient" /></svg></button>
                <button class="drop" aria-label="定向选项"><svg><use href="#i-down" /></svg></button>
                <button aria-label="显示样式"><svg><use href="#i-style" /></svg></button>
                <button class="drop" aria-label="样式选项"><svg><use href="#i-down" /></svg></button>
                <button aria-label="隐藏显示"><svg><use href="#i-eye" /></svg></button>
                <button class="drop" aria-label="隐藏选项"><svg><use href="#i-down" /></svg></button>
                <button aria-label="编辑外观"><svg><use href="#i-haze" /></svg></button>
                <button aria-label="应用布景"><svg><use href="#i-scene" /></svg></button>
                <button class="drop" aria-label="布景选项"><svg><use href="#i-down" /></svg></button>
                <button aria-label="视图设定"><svg><use href="#i-screen" /></svg></button>
                <button class="drop" aria-label="设定选项"><svg><use href="#i-down" /></svg></button>
              </div>
            </div>

            <ul class="tree">
              <li class="root"><svg class="caret"><use href="#i-open-down" /></svg><svg><use href="#i-part" /></svg><span>曲线阵列&nbsp; (默认&lt;&lt;默认&gt;_...</span></li>
              <li><svg class="caret"><use href="#i-right" /></svg><svg viewBox="0 0 20 20"><use href="#i-folder" /><circle cx="11" cy="12" r="4" fill="none" stroke="#3e6a7b" stroke-width="1.500" /><path d="M5 12h6V9" fill="none" stroke="#3e6a7b" stroke-width="1.500" /></svg><span>History</span></li>
              <li><svg viewBox="0 0 20 20"><use href="#i-folder" /><circle cx="10" cy="12" r="4" fill="#fff" stroke="#444" stroke-width="1.500" /><path d="M10 12l3-3" stroke="#c33" stroke-width="1.500" /></svg><span>传感器</span></li>
              <li><svg class="caret"><use href="#i-right" /></svg><svg viewBox="0 0 20 20"><use href="#i-folder" /><path d="M6 17l4-9 4 9M7 14h6" fill="none" stroke="#376575" stroke-width="1.800" /></svg><span>注解</span></li>
              <li><svg viewBox="0 0 20 20"><use href="#i-folder" /><path d="M14 9V8H7l4 4-4 5h7v-2" fill="none" stroke="#333" stroke-width="1.500" /></svg><span>方程式</span></li>
              <li><svg><use href="#i-material" /></svg><span>材质 &lt;未指定&gt;</span></li>
              <li><svg><use href="#i-plane" /></svg><span>前视基准面</span></li>
              <li><svg><use href="#i-plane" /></svg><span>上视基准面</span></li>
              <li><svg><use href="#i-plane" /></svg><span>右视基准面</span></li>
              <li><svg><use href="#i-origin" /></svg><span>原点</span></li>
              <li><svg class="caret"><use href="#i-right" /></svg><svg><use href="#i-revolve" /></svg><span>旋转3</span></li>
              <li class="selected"><svg><use href="#i-sketch" /></svg><span>(-) 草图7</span></li>
            </ul>

            <div class="splitter"><i class="knob"></i></div>
            <div class="callout">
              <div class="callout-title">方向一</div>
              <label for="spacing">等间距:</label><input id="spacing" type="text" value="60mm">
              <label for="count">实例:</label><input id="count" type="text" value="20">
              <i class="handle"></i>
            </div>
            <button class="corner ok" aria-label="确定"><svg><use href="#i-check" /></svg></button>
            <button class="corner cancel" aria-label="取消"><svg><use href="#i-cross" /></svg></button>
            <nav class="task-pane">
              <button aria-label="资源"><svg><use href="#i-home" /></svg></button>
              <button aria-label="设计库"><svg><use href="#i-books" /></svg></button>
              <button aria-label="文件探索器"><svg><use href="#i-open" /></svg></button>
              <button aria-label="视图调色板"><svg><use href="#i-palette" /></svg></button>
              <button aria-label="外观、布景"><svg><use href="#i-ball" /></svg></button>
              <button aria-label="自定义属性"><svg><use href="#i-list" /></svg></button>
            </nav>
            <div class="view-name">*上下二等角轴测</div>
          </main>
        </div>
      </div>

      <aside class="capture">
        <div class="dots"></div>
        <button aria-label="捕获屏幕"><svg><use href="#i-camera" /></svg></button>
        <button aria-label="录制视频"><svg><use href="#i-record" /></svg></button>
        <button aria-label="停止录制"><svg><use href="#i-stop" /></svg></button>
      </aside>
    </div>

    <nav class="model-tabs">
      <div class="steps">
        <button>|◂</button><button>◂</button><button>▸</button><button>▸|</button>
      </div>
      <button class="active">模型</button>
      <button>3D 视图</button>
      <button>运动算例1</button>
    </nav>

    <div class="snap-bar">
      <div class="bar layers">
        <i class="grip"></i>
        <select aria-label="图层"><option></option></select>
        <button aria-label="图层属性"><svg><use href="#l-small" /></svg></button>
      </div>
      <div class="bar lines">
        <i class="grip"></i>
        <button aria-label="图层"><svg><use href="#l-layer" /></svg></button>
        <button aria-label="移至图层"><svg><use href="#l-small" /></svg></button>
        <button aria-label="线色"><svg><use href="#l-pen" /></svg></button>
        <button aria-label="线粗"><svg><use href="#l-thick" /></svg></button>
        <button aria-label="线型"><svg><use href="#l-style" /></svg></button>
        <button aria-label="隐藏边线"><svg><use href="#l-swap" /></svg></button>
        <button aria-label="颜色显示"><svg><use href="#l-ord" /></svg></button>
      </div>
      <div class="bar snaps">
        <i class="grip"></i>
        <button aria-label="端点"><svg><use href="#s-point" /></svg></button>
        <button class="active" aria-label="中心点"><svg><use href="#s-center" /></svg></button>
        <button aria-label="中点"><svg><use href="#s-mid" /></svg></button>
        <button aria-label="象限点"><svg><use href="#s-quad" /></svg></button>
        <button aria-label="交叉点"><svg><use href="#s-cross" /></svg></button>
        <button aria-label="最近点"><svg><use href="#s-near" /></svg></button>
        <i class="sep"></i>
        <button aria-label="相切"><svg><use href="#s-tan" /></svg></button>
        <button aria-label="垂直"><svg><use href="#s-perp" /></svg></button>
        <button aria-label="平行"><svg><use href="#s-par" /></svg></button>
        <button aria-label="水平竖直"><svg><use href="#s-hv" /></svg></button>
        <button aria-label="与点水平竖直"><svg><use href="#s-hvp" /></svg></button>
        <button aria-label="长度"><svg><use href="#s-len" /></svg></button>
        <button aria-label="网格"><svg><use href="#s-grid" /></svg></button>
        <button aria-label="角度"><svg><use href="#s-angle" /></svg></button>
      </div>
    </div>

    <footer class="status">
      <span class="msg">显示选定的草图。</span>
      <span class="mode">在编辑 零件</span>
      <span class="units">-</span>
      <svg class="ico16"><use href="#i-tag" /></svg>
    </footer>
  </div>
</body>

</html>
```
FILE: styles.css
```css
* {
  box-sizing: border-box;
}

body {
  background: linear-gradient(#e8eaed, #dfe2e7 60%, #d2d4e0);
  color: #111;
  font-family: "Noto Sans", "Noto Sans CJK SC", sans-serif;
  font-size: 12px;
  line-height: 16px;
  margin: 0;
  min-height: 100vh;
  padding: 5px 7px 7px 8px;
}

button {
  align-items: center;
  background: none;
  border: 0;
  color: inherit;
  display: flex;
  flex: none;
  font: inherit;
  justify-content: center;
  padding: 0;
  white-space: nowrap;
}

input,
select {
  border: 0;
  font: inherit;
  margin: 0;
  min-width: 0;
  padding: 0;
}

svg {
  display: block;
  flex: none;
}

.defs {
  height: 0;
  position: absolute;
  width: 0;
}

.ghost {
  fill: #bababa;
  stroke: #989898;
}

.key {
  font-size: 10px;
}

.ico16 {
  height: 16px;
  width: 16px;
}

.ico20 {
  height: 20px;
  width: 20px;
}

.knob {
  background: #d0d0d0;
  border: 1px solid #8d8d8d;
  border-radius: 50%;
  height: 5px;
  width: 5px;
}

.drop {
  width: 16px;
}

.drop svg {
  height: 10px;
  width: 10px;
}

.dim {
  color: #808080;
}

.app {
  background: #b1b1b1;
  display: flex;
  flex-direction: column;
  min-height: calc(100vh - 12px);
}

/* title bar */
.titlebar {
  align-items: center;
  border-bottom: 1px solid #757575;
  display: flex;
  height: 30px;
  padding-left: 179px;
  position: relative;
}

.logo {
  align-items: center;
  background: linear-gradient(#fff 60%, #ececec);
  color: #d0281e;
  display: flex;
  gap: 6px;
  height: 33px;
  left: 10px;
  padding: 0 5px;
  position: absolute;
  top: 0;
  width: 140px;
  z-index: 2;
}

.logo-mark {
  height: 28px;
  width: 28px;
}

.logo-text {
  font-family: Lato, sans-serif;
  font-size: 16px;
  font-style: italic;
  line-height: 20px;
  padding-top: 4px;
}

.menu {
  display: flex;
  gap: 16px;
}

.pin svg {
  height: 15px;
  margin-left: 8px;
  width: 15px;
}

.quick {
  border-left: 2px solid #808080;
  display: flex;
  height: 28px;
  margin-left: 6px;
  padding-left: 13px;
}

.quick button {
  width: 22px;
}

.quick svg {
  height: 20px;
  width: 20px;
}

.quick .drop {
  width: 16px;
}

.quick .drop svg {
  height: 10px;
  width: 10px;
}

.quick .wide {
  width: 26px;
}

.quick .wide svg {
  height: 18px;
  width: 18px;
}

.doc-name {
  margin-left: auto;
  margin-right: 4px;
}

.search {
  align-items: center;
  background: #f3f3f3;
  display: flex;
  height: 21px;
  padding-left: 5px;
  width: 140px;
}

.search input {
  background: none;
  flex: 1;
  margin-left: 5px;
}

.search input::placeholder {
  color: #444;
}

.search .drop {
  color: #555;
  width: 12px;
}

.window-btns {
  display: flex;
  padding-left: 8px;
}

.window-btns button {
  height: 24px;
  width: 26px;
}

.window-btns svg {
  height: 17px;
  width: 17px;
}

.window-btns .drop {
  width: 12px;
}

.window-btns .drop svg {
  height: 10px;
  width: 10px;
}

.window-btns .help {
  font-size: 18px;
  font-weight: bold;
  width: 22px;
}

/* ribbon */
.ribbon {
  border-bottom: 1px solid #7c7c7c;
  color: #888;
  display: flex;
  height: 86px;
  line-height: 12px;
}

.group {
  border-right: 1px solid #bdbdbd;
  display: flex;
  padding: 7px 4px 5px;
}

.group + .group {
  padding-left: 0;
}

.group.last {
  border: 0;
}

.big {
  flex-direction: column;
  gap: 1px;
  justify-content: flex-start;
  padding-top: 11px;
  white-space: normal;
}

.big svg {
  height: 20px;
  width: 20px;
}

.big span {
  max-width: 40px;
}

.menu-btn {
  padding-top: 4px;
  position: relative;
}

.big .arrow {
  bottom: 0;
  height: 10px;
  position: absolute;
  width: 10px;
}

.w32 {
  width: 32px;
}

.w45 {
  width: 45px;
}

.w50 {
  width: 50px;
}

.w50 span {
  max-width: 46px;
}

.w60 {
  width: 58px;
}

.w60 span {
  max-width: none;
}

.stack {
  display: flex;
  flex-direction: column;
  justify-content: space-between;
  padding: 0 7px 0 4px;
}

.stack button {
  gap: 5px;
  height: 24px;
  justify-content: flex-start;
}

.stack svg {
  height: 18px;
  width: 18px;
}

.more {
  color: #333;
  font-size: 16px;
  margin-left: auto;
  padding-right: 2px;
}

/* work area */
.work {
  display: flex;
  flex: 1;
}

.document {
  background: #fff;
  display: flex;
  flex: 1;
  flex-direction: column;
  min-width: 0;
}

.tab-row {
  display: flex;
  height: 22px;
  justify-content: space-between;
}

.tabs {
  border-bottom: 1px solid #808080;
  display: flex;
}

.tabs button {
  background: #9d9d9d;
  border-right: 1px solid #8a8a8a;
  min-width: 55px;
  padding: 0 7px;
}

.tabs .latin {
  padding: 0 4px;
}

.tabs .active {
  background: #b1b1b1;
  color: #333;
}

.doc-btns {
  color: #8b8b8b;
  display: flex;
  gap: 6px;
  padding: 5px 10px 0 0;
}

.doc-btns button {
  height: 20px;
  width: 20px;
}

.doc-btns svg {
  height: 15px;
  width: 15px;
}

.split {
  display: flex;
  flex: 1;
}

/* property panel */
.panel {
  background: #b1b1b1;
  border-right: 1px solid #858585;
  display: flex;
  flex-direction: column;
  width: 225px;
}

.panel-grip {
  align-items: center;
  border: 1px solid #8a8a8a;
  border-width: 1px 0;
  display: flex;
  height: 15px;
  justify-content: center;
  margin: 2px 0 4px;
}

.panel-tabs {
  border-bottom: 1px solid #8e8e8e;
  display: flex;
  height: 26px;
}

.panel-tabs button {
  background: #9b9b9b;
  border-right: 1px solid #888;
  width: 39px;
}

.panel-tabs .active {
  background: #b1b1b1;
  margin-bottom: -1px;
}

.panel-tabs svg {
  height: 18px;
  width: 18px;
}

.panel-head {
  align-content: flex-start;
  border-bottom: 1px solid #7e7e7e;
  display: flex;
  flex-wrap: wrap;
  height: 63px;
  justify-content: space-between;
  padding: 7px 11px 0 6px;
  row-gap: 10px;
}

.panel-head h1 {
  align-items: center;
  color: #222;
  display: flex;
  font-size: 13px;
  gap: 5px;
  height: 20px;
  margin: 0;
}

.panel-help svg {
  height: 15px;
  width: 15px;
}

.confirm {
  display: flex;
  gap: 14px;
  width: 100%;
}

.confirm svg {
  height: 13px;
  width: 13px;
}

.ok {
  color: #3e9c35;
}

.cancel {
  color: #cf2a1f;
}

.panel-scroll {
  display: flex;
  flex: 1;
  justify-content: space-between;
}

.props {
  padding-left: 3px;
  width: 204px;
}

.props section {
  border-bottom: 1px solid #858585;
}

.props .first {
  padding: 4px 0 10px;
}

.props h2 {
  align-items: center;
  color: #222;
  display: flex;
  font-size: 12px;
  font-weight: 500;
  height: 30px;
  margin: 0;
  padding: 0 1px 0 3px;
}

.props h2 label {
  align-items: center;
  display: flex;
}

.opt {
  align-items: center;
  display: flex;
  height: 23px;
  padding-left: 30px;
}

.off {
  color: #8b8b8b;
}

.props input[type="radio"],
.props input[type="checkbox"] {
  appearance: none;
  background: #e6e6e6;
  border: 1px solid #a2a2a2;
  height: 11px;
  margin-right: 4px;
  width: 11px;
}

.props input[type="radio"] {
  border-radius: 50%;
}

.props input[type="radio"]:checked {
  background: radial-gradient(#174a68 0 2px, #dceaf2 3px);
  border-color: #66808e;
}

.props input[type="checkbox"]:checked::after {
  border: solid #36367a;
  border-width: 0 2px 2px 0;
  content: "";
  display: block;
  height: 7px;
  margin: 0 3px;
  transform: rotate(40deg);
  width: 4px;
}

.field {
  display: block;
  height: 22px;
  padding: 2px 0 0 29px;
}

.box {
  background: #fff;
  border: 1px solid #8f8f8f;
  display: block;
  height: 22px;
  margin-left: 29px;
  width: 163px;
}

.fold {
  color: #555;
  height: 14px;
  margin-left: auto;
  width: 17px;
}

.fold svg {
  height: 11px;
  width: 11px;
}

.open svg {
  transform: rotate(180deg);
}

.focus {
  outline: 1px dotted #555;
}

.bodies {
  display: flex;
  gap: 8px;
  padding-left: 4px;
}

.bodies input {
  background: #cbe3f7;
  border: 2px solid #73b3dd;
  height: 32px;
  width: 158px;
}

.resize {
  display: flex;
  height: 16px;
  justify-content: center;
  padding: 2px 0 0 17px;
}

.props .options {
  border: 0;
}

.options h2 {
  height: 27px;
}

.options .opt {
  height: 22px;
}

.options .off {
  height: 20px;
}

.options .pair {
  padding-top: 6px;
}

.options .pair .opt {
  height: 17px;
}

.scrollbar {
  background: #ececec;
  display: flex;
  flex-direction: column;
  margin-right: 2px;
  width: 16px;
}

.scrollbar button {
  height: 18px;
  width: 16px;
}

.scrollbar svg {
  height: 7px;
  width: 7px;
}

.track {
  display: flex;
  flex: 1;
  flex-direction: column;
  justify-content: flex-end;
}

.thumb {
  align-items: center;
  background: linear-gradient(90deg, #d9d9d9, #b0b0b0);
  border: 1px solid #8b8b8b;
  display: flex;
  height: 64%;
  justify-content: center;
}

/* graphics area */
.viewport {
  border-bottom: 1px solid #888;
  display: flex;
  flex: 1;
  flex-direction: column;
  min-width: 0;
  overflow: hidden;
  position: relative;
}

.scene {
  height: 504px;
  left: 0;
  position: absolute;
  top: 0;
  width: 934px;
}

.hull path,
.stars path,
.curve {
  fill: none;
  stroke: #ef9a43;
}

.hull path {
  stroke-dasharray: 3 3;
}

.curve {
  stroke-width: 2;
}

.scene text {
  font-family: "Liberation Mono", monospace;
  font-size: 11px;
}

.axis-y {
  fill: #1c8034;
}

.axis-x {
  fill: #b01c24;
}

.axis-z {
  fill: #2222c0;
}

.view-bar {
  display: flex;
  padding: 1px 0 0 186px;
  position: relative;
}

.views,
.tools {
  display: flex;
}

.views button {
  border: 1px solid transparent;
  height: 26px;
  width: 26px;
}

.views .active {
  background: #919191;
  border-color: #555;
}

.views svg,
.tools svg {
  height: 18px;
  width: 18px;
}

.tools button {
  height: 26px;
  width: 25px;
}

.tools .drop {
  color: #777;
  width: 15px;
}

.tools .drop svg {
  height: 10px;
  width: 10px;
}

.tree {
  display: grid;
  grid-auto-rows: 1fr;
  height: 260px;
  list-style: none;
  margin: 7px 0 0;
  padding: 0 0 0 24px;
  position: relative;
  width: 240px;
}

.tree li {
  align-items: center;
  display: flex;
  gap: 4px;
  justify-self: start;
  padding: 0 3px 0 20px;
  white-space: nowrap;
}

.tree svg {
  height: 18px;
  width: 18px;
}

.tree .caret {
  height: 9px;
  margin: 0 6px 0 -20px;
  width: 10px;
}

.tree .root {
  margin-left: -23px;
}

.tree .root .caret {
  height: 8px;
  margin-right: 8px;
  width: 8px;
}

.tree .selected {
  background: #eaf4fb;
  border: 1px solid #6f97b5;
  margin-left: 17px;
  padding-left: 2px;
}

.splitter {
  align-items: center;
  background: #a5a5a5;
  border: 1px solid #8a8a8a;
  display: flex;
  height: 38px;
  justify-content: center;
  left: 0;
  position: absolute;
  top: 222px;
  width: 8px;
}

.callout {
  background: #f3f3f3;
  border: 1px solid #111;
  display: grid;
  grid-template-columns: 47px 1fr;
  grid-template-rows: 24px 24px 24px;
  left: 614px;
  line-height: 24px;
  position: absolute;
  top: 187px;
  width: 95px;
}

.callout-title {
  font-size: 11px;
  grid-column: 1 / 3;
  text-align: center;
}

.callout label {
  font-size: 11px;
  padding-left: 6px;
}

.callout input {
  background: #fff;
  border-left: 1px solid #111;
  font-size: 11px;
  padding-left: 3px;
}

.callout #spacing {
  border-top: 1px solid #111;
}

.handle {
  background: #eee;
  border: 1px solid #111;
  border-radius: 50%;
  height: 6px;
  left: -3px;
  position: absolute;
  top: 33px;
  width: 6px;
}

.corner {
  opacity: 0.25;
  position: absolute;
  right: 74px;
  top: 32px;
}

.corner svg {
  height: 28px;
  width: 28px;
}

.corner.cancel {
  right: 31px;
  top: 61px;
}

.task-pane {
  background: #a3a3a3;
  border: 1px solid #888;
  position: absolute;
  right: 0;
  top: 22px;
  width: 25px;
}

.task-pane button {
  border-bottom: 1px solid #8a8a8a;
  height: 23px;
  width: 23px;
}

.task-pane button:last-child {
  border: 0;
}

.task-pane svg {
  height: 18px;
  width: 18px;
}

.view-name {
  font-size: 13px;
  font-weight: bold;
  margin-top: auto;
  padding: 0 0 1px 12px;
  position: relative;
}

.capture {
  display: flex;
  flex-direction: column;
  padding-left: 4px;
  width: 32px;
}

.capture button {
  height: 25px;
}

.capture svg {
  height: 18px;
  width: 18px;
}

.capture .dots {
  border-top: 2px dotted #ddd;
  margin: 2px 2px 10px 0;
}

.capture button:last-child {
  border-bottom: 1px solid #858585;
  height: 33px;
  padding-bottom: 8px;
}

/* bottom bars */
.model-tabs {
  display: flex;
  height: 16px;
}

.model-tabs > button {
  background: #a5a5a5;
  border-right: 1px solid #919191;
  padding: 0 6px;
}

.model-tabs > .active {
  background: #b1b1b1;
  padding: 0 11px;
}

.steps {
  border-top: 1px solid #222;
  color: #8d8d8d;
  display: flex;
}

.steps button {
  border: 1px solid #9a9a9a;
  font-size: 10px;
  width: 16px;
}

.snap-bar {
  border-bottom: 1px solid #808080;
  display: flex;
  height: 32px;
}

.bar {
  align-items: center;
  border-right: 1px solid #8b8b8b;
  display: flex;
}

.bar button {
  height: 25px;
  width: 27px;
}

.bar svg {
  height: 18px;
  width: 18px;
}

.bar .active {
  background: #fff;
  border: 1px solid #888;
}

.layers {
  padding-right: 8px;
}

.lines {
  padding-right: 6px;
}

.snaps {
  padding-right: 8px;
}

.bar select {
  appearance: none;
  background: linear-gradient(#999, #999) right 4px center / 6px 2px no-repeat #ededed;
  height: 22px;
  margin-left: 9px;
  width: 95px;
}

.grip {
  border-left: 3px dotted #dadada;
  height: 25px;
  margin: 0 7px 0 3px;
}

.layers .grip {
  margin-right: 0;
}

.sep {
  background: #777;
  height: 22px;
  width: 1px;
}

.status {
  align-items: center;
  display: flex;
  height: 18px;
  line-height: 18px;
  padding-right: 20px;
}

.mode {
  border: 1px solid #a0a0a0;
  border-width: 0 1px;
  margin-left: auto;
  padding: 0 5px;
}

.units {
  color: #777;
  padding: 0 73px 0 92px;
}
```
